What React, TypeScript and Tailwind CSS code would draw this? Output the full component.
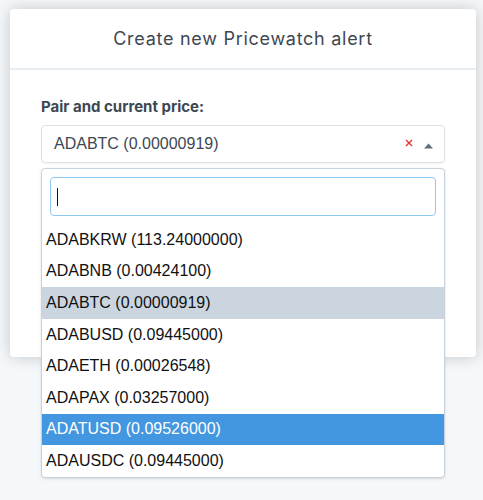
const pairs = [
    { name: 'ADABKRW', price: '113.24000000' },
    { name: 'ADABNB', price: '0.00424100' },
    { name: 'ADABTC', price: '0.00000919' },
    { name: 'ADABUSD', price: '0.09445000' },
    { name: 'ADAETH', price: '0.00026548' },
    { name: 'ADAPAX', price: '0.03257000' },
    { name: 'ADATUSD', price: '0.09526000' },
    { name: 'ADAUSDC', price: '0.09445000' },
];

const selected = 'ADABTC';
const highlighted = 'ADATUSD';

export default function App() {
    return (
        <div className="min-h-[500px] bg-[#f5f8fa] pt-[9px] pl-[10px] font-['Inter',sans-serif]">
            <div className="w-[466px] h-[348px] bg-white rounded-[4px] shadow-[0_0_16px_rgba(0,0,0,0.2)]">
                {/* Header */}
                <div className="h-[61px] flex items-center justify-center border-b-2 border-[#e8edf1] text-[18px] tracking-[0.04em] text-[#3d4852]">
                    Create new Pricewatch alert
                </div>

                {/* Body */}
                <div className="px-[31px] pt-[27px]">
                    <label className="block text-[15px] leading-5 font-bold text-[#3d4852] mb-[8px]">
                        Pair and current price:
                    </label>

                    <div className="relative">
                        <div className="h-[38px] flex items-center justify-between border border-[#dae1e7] rounded-[4px] pl-[12px] pr-[11px] font-['Liberation_Sans',Arial,sans-serif] text-[16px] text-[#3d4852] shadow-[0_1px_2px_rgba(0,0,0,0.05)]">
                            <span>ADABTC (0.00000919)</span>
                            <div className="flex items-center gap-[11px]">
                                <svg width="8" height="8" viewBox="0 0 8 8" className="mb-[2px]">
                                    <path d="M1 1L7 7M7 1L1 7" stroke="#e3342f" strokeWidth="1.4" />
                                </svg>
                                <svg width="9" height="6" viewBox="0 0 9 6" className="mt-[3px]">
                                    <path d="M0 5.5L4.5 0.5L9 5.5Z" fill="#606f7b" />
                                </svg>
                            </div>
                        </div>

                        {/* Field hidden behind the open list */}
                        <div className="mt-[54px] h-[39px] border border-[#dae1e7] rounded-[4px]" />

                        {/* Dropdown */}
                        <div className="absolute top-[43px] left-0 right-0 bg-white border border-[#c8d2dc] rounded-[4px] shadow-[0_1px_3px_rgba(0,0,0,0.12)] z-10">
                            <div className="px-[8px] pt-[8px] pb-[8px]">
                                <div className="h-[39px] border-[1.5px] border-[#8ec9f2] rounded-[4px] flex items-center pl-[6px]">
                                    <div className="w-px h-[18px] bg-[#111]" />
                                </div>
                            </div>
                            <div className="font-['Liberation_Sans',Arial,sans-serif] text-[16px]">
                                {pairs.map(p => {
                                    const isSel = p.name === selected;
                                    const isHi = p.name === highlighted;
                                    return (
                                        <div
                                            key={p.name}
                                            className={`h-[31.6px] flex items-center px-[4px] ${isHi ? 'bg-[#4397e0] text-white' : isSel ? 'bg-[#cbd5df] text-[#111]' : 'text-[#111]'}`}
                                        >
                                            {p.name} ({p.price})
                                        </div>
                                    );
                                })}
                            </div>
                        </div>
                    </div>
                </div>
            </div>
        </div>
    );
}
